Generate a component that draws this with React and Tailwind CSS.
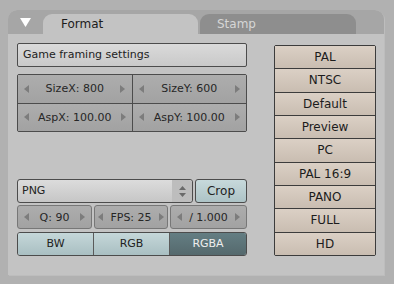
import React from "react";

const font = { fontFamily: '"DejaVu Sans", Verdana, sans-serif' };

const presets = ["PAL", "NTSC", "Default", "Preview", "PC", "PAL 16:9", "PANO", "FULL", "HD"];

const ArrowL = () => (
  <svg width="5" height="8" viewBox="0 0 5 8" className="shrink-0">
    <path d="M5 0 L0 4 L5 8 Z" fill="#7c7c7c" />
  </svg>
);

const ArrowR = () => (
  <svg width="5" height="8" viewBox="0 0 5 8" className="shrink-0">
    <path d="M0 0 L5 4 L0 8 Z" fill="#7c7c7c" />
  </svg>
);

const NumField = ({ label, className = "" }) => (
  <div className={`flex items-center justify-between px-[6px] bg-gradient-to-b from-[#adadad] to-[#a2a2a2] text-[#262626] ${className}`}>
    <ArrowL />
    <span className="leading-none">{label}</span>
    <ArrowR />
  </div>
);

export default function App() {
  return (
    <div className="w-[394px] h-[284px] bg-[#b1b1b1] pl-[8px] pt-[10px] text-[11px] overflow-hidden" style={font}>
      <div className="w-[376px] h-[265px] bg-[#c3c3c3] rounded-t-[9px] flex flex-col shadow-[1px_1px_0_#bdbdbd]">
        {/* header with tabs */}
        <div className="h-[24px] bg-[#a6a6a6] rounded-t-[9px] flex items-end">
          <div className="w-[35px] h-full flex items-center justify-center">
            <svg width="11" height="10" viewBox="0 0 11 10">
              <path d="M0 1 L11 1 L5.5 10 Z" fill="#ffffff" />
            </svg>
          </div>
          <div className="w-[155px] h-[20px] bg-[#c3c3c3] rounded-t-[9px] pl-[18px] flex items-center text-[12px] text-[#1c1c1c]">
            Format
          </div>
          <div className="w-[156px] h-[20px] ml-[2px] bg-[#8e8e8e] rounded-t-[9px] pl-[17px] flex items-center text-[12px] text-[#d6d6d6]">
            Stamp
          </div>
        </div>

        <div className="flex pl-[9px] pt-[9px]">
          {/* left column */}
          <div className="w-[230px] flex flex-col">
            <div className="h-[24px] border border-[#4c4c4c] rounded-[2px] bg-gradient-to-b from-[#dadada] to-[#c9c9c9] flex items-center pl-[5px] text-[#222]">
              Game framing settings
            </div>

            <div className="mt-[7px] h-[58px] border border-[#4c4c4c] rounded-[2px] grid grid-cols-2 grid-rows-2 bg-[#4c4c4c] gap-px">
              <NumField label="SizeX: 800" />
              <NumField label="SizeY: 600" />
              <NumField label="AspX: 100.00" />
              <NumField label="AspY: 100.00" />
            </div>

            <div className="mt-[47px] flex gap-[2px] h-[24px]">
              <div className="w-[176px] border border-[#4c4c4c] rounded-[3px] bg-gradient-to-b from-[#dcdcdc] to-[#c6c6c6] flex items-center pl-[4px] text-[#222]">
                <span className="flex-1">PNG</span>
                <div className="w-[20px] h-full flex items-center justify-center bg-[#bdbdbd] rounded-r-[3px]">
                  <svg width="7" height="11" viewBox="0 0 7 11">
                    <path d="M3.5 0 L7 4 L0 4 Z M0 7 L7 7 L3.5 11 Z" fill="#6a6a6a" />
                  </svg>
                </div>
              </div>
              <div className="flex-1 border border-[#4c4c4c] rounded-[3px] bg-gradient-to-b from-[#c7d9db] to-[#adc3c6] flex items-center justify-center text-[#222] text-[12px]">
                Crop
              </div>
            </div>

            <div className="mt-[2px] flex gap-[2px] h-[24px]">
              <NumField label="Q: 90" className="w-[75px] border border-[#777] rounded-[3px]" />
              <NumField label="FPS: 25" className="w-[74px] border border-[#777] rounded-[3px] !px-[3px]" />
              <NumField label="/ 1.000" className="w-[77px] border border-[#777] rounded-[3px]" />
            </div>

            <div className="mt-[3px] h-[24px] border border-[#4c4c4c] rounded-[3px] flex overflow-hidden">
              <div className="w-[76px] border-r border-[#5a5a5a] bg-gradient-to-b from-[#c5d7d9] to-[#a9bfc2] flex items-center justify-center text-[#222]">
                BW
              </div>
              <div className="w-[76px] border-r border-[#5a5a5a] bg-gradient-to-b from-[#c5d7d9] to-[#a9bfc2] flex items-center justify-center text-[#222]">
                RGB
              </div>
              <div className="flex-1 bg-gradient-to-b from-[#647e83] to-[#55696d] flex items-center justify-center text-[#eeeeee]">
                RGBA
              </div>
            </div>
          </div>

          {/* right column presets */}
          <div className="ml-[27px] mt-[2px] w-[102px] h-[211px] border border-[#3c3c3c] rounded-[2px] grid grid-rows-9 bg-[#3c3c3c] gap-px">
            {presets.map((p) => (
              <div
                key={p}
                className="bg-gradient-to-b from-[#dbd0c5] to-[#c9bdb1] flex items-center justify-center text-[#1c1c1c] text-[12px]"
              >
                {p}
              </div>
            ))}
          </div>
        </div>
      </div>
    </div>
  );
}
